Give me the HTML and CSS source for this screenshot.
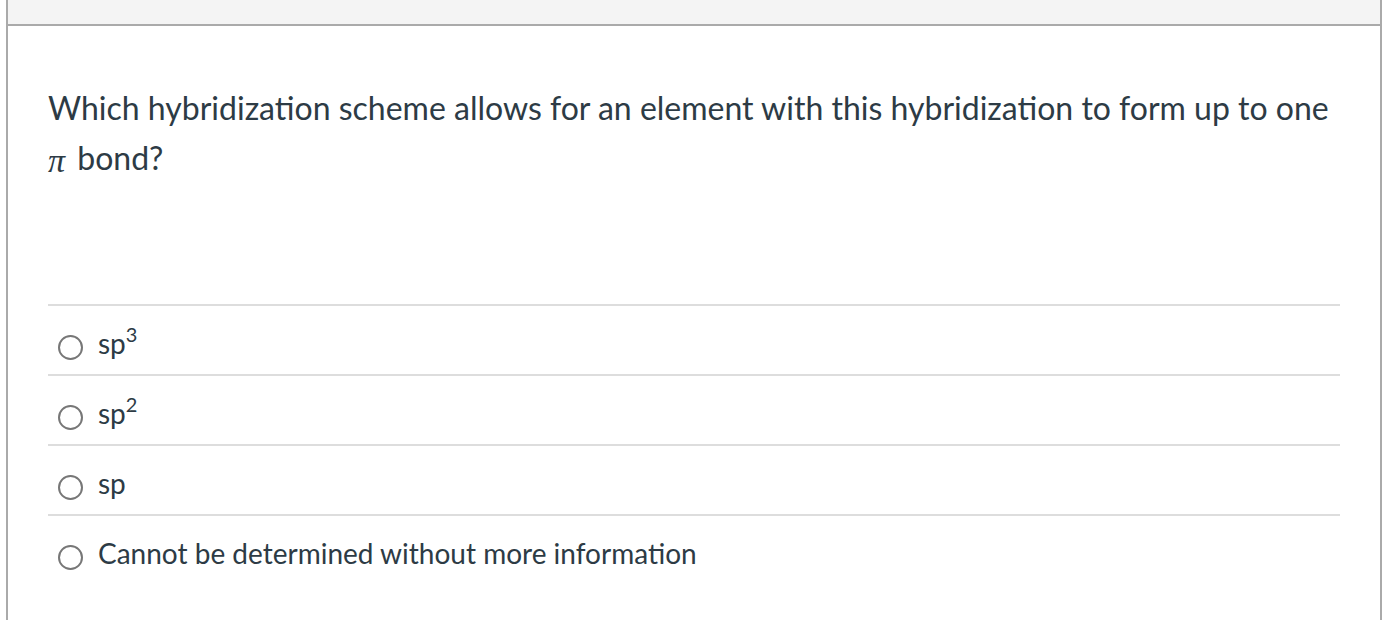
FILE: index.html
```html
<!DOCTYPE html>
<html>
<head>
<meta charset="utf-8">
<link rel="stylesheet" href="styles.css">
</head>
<body>
<div class="question">
  <div class="header"></div>
  <div class="content">
    <div class="prompt">
      <p>Which hybridization scheme allows for an element with this hybridization to form up to one<br><i class="pi">π</i> bond?</p>
    </div>
    <div class="answers">
      <div class="answer"><span class="radio"></span><span class="label">sp<sup>3</sup></span></div>
      <div class="answer"><span class="radio"></span><span class="label">sp<sup>2</sup></span></div>
      <div class="answer"><span class="radio"></span><span class="label">sp</span></div>
      <div class="answer"><span class="radio"></span><span class="label">Cannot be determined without more information</span></div>
    </div>
  </div>
</div>
</body>
</html>
```
FILE: styles.css
```css
html, body {
  margin: 0;
  padding: 0;
  background: #fff;
}
body {
  padding-left: 6px;
  font-family: Lato, "Noto Sans", sans-serif;
  color: #2d3b45;
}
.question {
  width: 1372px;
  height: 640px;
  border-left: 2px solid #aaaaaa;
  border-right: 2px solid #aaaaaa;
}
.header {
  height: 24px;
  background: #f4f4f4;
  border-bottom: 2px solid #aaaaaa;
}
.content {
  padding: 0 40px 0 40px;
}
.prompt {
  height: 278px;
}
.prompt p {
  margin: 0;
  padding-top: 57px;
  font-size: 32px;
  line-height: 50px;
}
.pi {
  font-family: "Liberation Serif", "DejaVu Serif", serif;
  font-style: italic;
  font-size: 34px;
  margin-right: 4px;
  position: relative;
  top: 2px;
}
.answers {
  border-top: 2px solid #dddddd;
}
.answer {
  display: flex;
  align-items: center;
  height: 68px;
  border-bottom: 2px solid #dddddd;
}
.answer:last-child {
  border-bottom: none;
}
.radio {
  box-sizing: border-box;
  width: 25px;
  height: 25px;
  border: 2px solid #777777;
  border-radius: 50%;
  margin-left: 10px;
  margin-top: 14px;
  flex: none;
}
.label {
  margin-left: 15px;
  font-size: 28px;
  line-height: 30px;
  margin-top: 5px;
}
.label sup {
  font-size: 20px;
  line-height: 0;
  position: relative;
  top: -1px;
}
```
